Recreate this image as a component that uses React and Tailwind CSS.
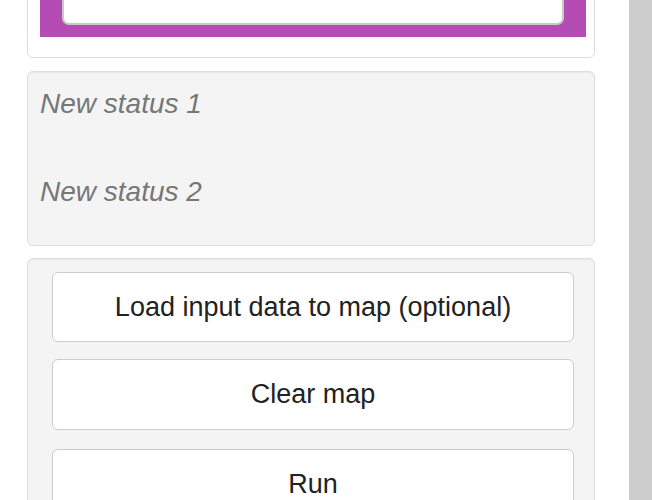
import React from "react";

export default function App() {
  const font = { fontFamily: '"Liberation Sans", Arial, sans-serif' };
  return (
    <div className="flex h-[500px] w-[652px] overflow-hidden bg-white" style={font}>
      <div className="flex-1 min-w-0">
        <div className="ml-[27px] w-[568px]">
          {/* top panel (scrolled) */}
          <div className="mt-[-60px] rounded-[6px] border border-[#dcdcdc] bg-white pb-[20px]">
            <div className="ml-[12px] w-[546px] bg-[#b44cb4] px-[22px] pt-[10px] pb-[12px]">
              <div className="h-[74px] rounded-[7px] border-2 border-[#c6cac6] bg-white" />
            </div>
          </div>

          {/* status well */}
          <div className="mt-[13px] h-[175px] rounded-[6px] border border-[#dedede] bg-[#f4f4f4] pl-[12px] pt-[16px] shadow-[inset_0_1px_1px_rgba(0,0,0,0.05)]">
            <p className="text-[28px] leading-[32px] italic text-[#777777]">New status 1</p>
            <p className="mt-[56px] text-[28px] leading-[32px] italic text-[#777777]">New status 2</p>
          </div>

          {/* buttons well */}
          <div className="mt-[12px] h-[300px] rounded-[6px] border border-[#dedede] bg-[#f4f4f4] pt-[13px] shadow-[inset_0_1px_1px_rgba(0,0,0,0.05)]">
            <button className="ml-[24px] flex h-[70px] w-[522px] items-center justify-center rounded-[6px] border border-[#cccccc] bg-white text-[27px] text-[#222222]">
              Load input data to map (optional)
            </button>
            <button className="ml-[24px] mt-[17px] flex h-[71px] w-[522px] items-center justify-center rounded-[6px] border border-[#cccccc] bg-white text-[27px] text-[#222222]">
              Clear map
            </button>
            <button className="ml-[24px] mt-[19px] flex h-[70px] w-[522px] items-center justify-center rounded-[6px] border border-[#cccccc] bg-white text-[27px] text-[#222222]">
              Run
            </button>
          </div>
        </div>
      </div>
      <div className="h-full w-[23px] shrink-0 bg-[#cdcdcd]" />
    </div>
  );
}
